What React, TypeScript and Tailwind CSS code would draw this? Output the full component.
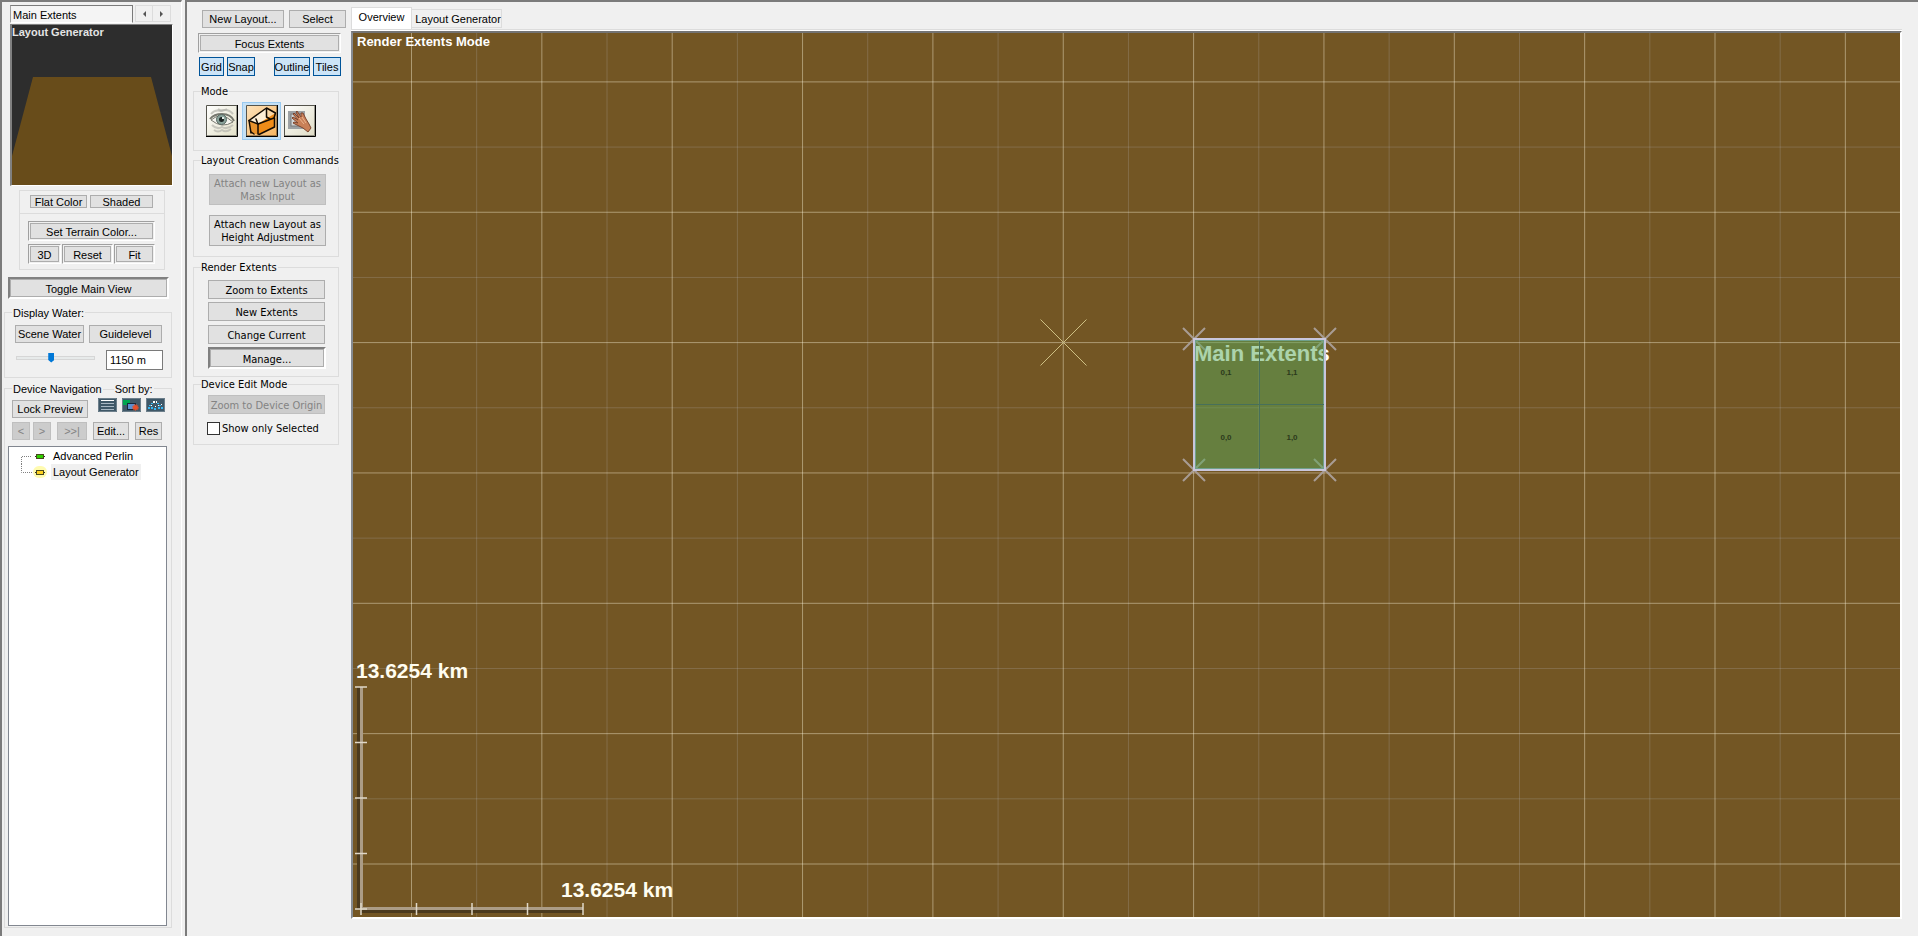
import { ReactNode } from 'react'
import clsx from 'clsx'
import { twMerge } from 'tailwind-merge'

const SANS = "font-['Liberation_Sans',Arial,sans-serif]"
const TAHOMA = "font-['DejaVu_Sans_Condensed','DejaVu_Sans',sans-serif]"

type ButtonProps = {
  children: ReactNode
  className?: string
  disabled?: boolean
  active?: boolean
}

const Button = ({ children, className, disabled, active }: ButtonProps) => (
  <button
    type="button"
    disabled={disabled}
    aria-pressed={active}
    className={twMerge(
      'flex items-center justify-center whitespace-nowrap border pt-px leading-[13px]',
      disabled && 'bg-[#cccccc] border-[#bfbfbf] text-[#838383]',
      active && 'bg-[#cce4f7] border-[#005499]',
      !disabled && !active && 'bg-[#e1e1e1] border-[#adadad]',
      className
    )}
  >
    {children}
  </button>
)

// Sunken frame around a button
const Sunken = ({
  children,
  className,
  deep,
}: {
  children: string
  className?: string
  deep?: boolean
}) => (
  <div
    className={clsx(
      'flex border-r-white border-b-white',
      deep
        ? 'border-2 border-t-[#808080] border-l-[#808080]'
        : 'border p-px border-t-[#a0a0a0] border-l-[#a0a0a0]',
      className
    )}
  >
    <Button className="flex-1 pt-[2px]">{children}</Button>
  </div>
)

const Group = ({
  title,
  children,
  className,
}: {
  title: ReactNode
  children: ReactNode
  className?: string
}) => (
  <fieldset className={clsx('min-w-0 border border-[#dcdcdc]', className)}>
    <legend className="ml-[7px] h-[14px] pr-px leading-[16px] whitespace-nowrap">
      {title}
    </legend>
    {children}
  </fieldset>
)

const ListIcon = () => (
  <svg width="19" height="14" viewBox="0 0 19 14">
    <rect width="19" height="14" fill="#3f5868" />
    <path d="M3 2.5h13" stroke="#fff" />
    <path d="M3 5.5h13M3 8.5h13M3 11.5h13" stroke="#a9b8c4" />
    <path d="M.5 .5h18v13H.5z" fill="none" stroke="#6d7f8b" />
  </svg>
)

const ShapesIcon = () => (
  <svg width="19" height="14" viewBox="0 0 19 14">
    <rect width="19" height="14" fill="#3f5868" />
    <path d="M.5 .5h18v13H.5z" fill="none" stroke="#6d7f8b" />
    <rect x="1" y="2" width="7" height="5" fill="#00a650" />
    <rect x="5.5" y="5.5" width="8" height="6" fill="#5b8fd0" stroke="#16283a" />
    <circle cx="13.5" cy="9.5" r="2.5" fill="#e8502a" />
    <circle cx="13.5" cy="9.5" r="3" fill="none" stroke="#e8502a" strokeDasharray="1 1" />
  </svg>
)

const GraphIcon = () => (
  <svg width="19" height="14" viewBox="0 0 19 14" shapeRendering="crispEdges">
    <rect width="19" height="14" fill="#3f5868" />
    <path d="M.5 .5h18v13H.5z" fill="none" stroke="#6d7f8b" />
    <path d="M2 9h2v2H2zM5 9h2v2H5zM8 10h2v2H8zM12 9h2v2h-2zM15 9h2v2h-2z" fill="#35b6f2" />
    <path d="M3 7h2v1H3zM5 5h2v1H5zM11 5h2v1h-2zM13 7h2v1h-2z" fill="#35b6f2" />
    <path d="M7 3h2v2H7zM10 3h1v2h-1zM5 7h1v1H5zM9 8h1v1H9zM12 7h1v1h-1zM15 6h1v1h-1z" fill="#fff" />
  </svg>
)

// Bevelled tile shared by the mode icons
const ModeTile = ({
  id,
  from,
  to,
  children,
}: {
  id: string
  from: string
  to: string
  children: ReactNode
}) => (
  <svg className="block" width="32" height="32" viewBox="0 0 32 32">
    <defs>
      <linearGradient id={id} x1="0" y1="0" x2="1" y2="1">
        <stop offset="0" stopColor={from} />
        <stop offset="1" stopColor={to} />
      </linearGradient>
    </defs>
    <rect width="32" height="32" fill={`url(#${id})`} />
    {children}
    <path d="M.5 32V.5H32" fill="none" stroke="#55544c" />
    <path d="M31.5 0v31.5H0" fill="none" stroke="#000" />
    <path d="M30.5 1v29.5H1" fill="none" stroke="#000" strokeOpacity="0.35" />
  </svg>
)

const EyeIcon = () => (
  <ModeTile id="tile-eye" from="#ffffff" to="#e2dfc6">
    <g fill="none" stroke="#b4b4ac" strokeWidth="2" strokeOpacity="0.7">
      <path d="M5 9q4-5 10-3q7-3 12 3" />
      <path d="M6 20q5 5 10 2q5 3 11-2M8 25q4 3 8 0q4 3 9-1" />
      <path d="M12 4q4 3 9 0" />
    </g>
    <path d="M4 14q4-5 12-5q9 0 12 7" fill="none" stroke="#77786f" strokeWidth="2" />
    <path d="M5 15q10-9 22 2q-11 7-22-2z" fill="#f4f4ee" stroke="#77786f" />
    <circle cx="15.5" cy="14.5" r="5" fill="#8aa39b" stroke="#5a6a63" />
    <circle cx="15.5" cy="14.5" r="2.5" fill="#1d2422" />
    <path d="M16 12h2v2h-2z" fill="#e4eeea" />
  </ModeTile>
)

const BoxIcon = () => (
  <ModeTile id="tile-box" from="#fde3bd" to="#f7b35c">
    <path d="M3 15.5L20.5 3L29.5 8L12 19z" fill="#fdeed6" />
    <path d="M20.5 3L29.5 8L25 15L20.5 12z" fill="#fbd9a8" />
    <path d="M3 15.5L12 19L12 29.5L5 28z" fill="#e8922c" />
    <path d="M12 19L29.5 8L28.5 22L12 29.5z" fill="#f08c18" />
    <g fill="none" stroke="#120a02" strokeWidth="1.5" strokeLinejoin="round" strokeLinecap="round">
      <path d="M3 15.5L20.5 3L29.5 8L28 13L12 19z" />
      <path d="M3 15.5L5 28M12 19V29M28.500 13L28.5 22L13 29.5" />
      <path d="M20.5 4V12L24 14M10 14l1.5 4" />
      <path d="M5 27l3 2" />
    </g>
  </ModeTile>
)

const HandIcon = () => (
  <ModeTile id="tile-hand" from="#ffffff" to="#dedbc4">
    <rect x="4" y="6" width="17" height="18" fill="#9da1a4" />
    <rect x="7" y="9" width="11" height="12" fill="#d3d5d6" stroke="#777a7c" />
    <path
      d="M12 7l1-1 4 6 0-4 2 0 3 6 3 5 2 4-3 4-5-4-4-2-6-3 1-1 4 1-6-5 1-1 5 3-5-6 1-1 5 5z"
      fill="#c98058"
      stroke="#7c4630"
      strokeLinejoin="round"
    />
    <path d="M15 13l5 6M18 12l4 6" stroke="#edb58e" />
  </ModeTile>
)

const DeviceIcon = ({ color, halo }: { color: string; halo?: boolean }) => (
  <svg width="16" height="12" viewBox="0 0 16 12">
    {halo && <rect x="1" y="0" width="14" height="12" rx="6" fill="#fffbb0" />}
    <path d="M3 6.5h10" stroke="#333" />
    <rect x="4.5" y="4.5" width="7" height="4" fill={color} stroke="#4a4a20" />
  </svg>
)

const devices = [
  { name: 'Advanced Perlin', color: '#2fd000', selected: false },
  { name: 'Layout Generator', color: '#ffd21f', selected: true },
]

const Preview = () => (
  <div className="relative ml-2 mt-px h-[162px] w-[163px] border-t border-l-2 border-r border-b border-t-[#808080] border-l-[#808080] border-r-white border-b-white bg-[#2d2d2d]">
    <svg className="block" width="160" height="160" viewBox="0 0 160 160">
      <polygon points="21,52 139,52 160,131 160,160 0,160 0,131" fill="#684c1a" />
    </svg>
    <span className="absolute left-0 top-px text-[11px] font-bold leading-[13px] text-[#e4e4e4]">
      Layout Generator
    </span>
  </div>
)

const LeftPanel = () => (
  <aside
    className={clsx(
      SANS,
      'flex w-[182px] shrink-0 flex-col border-t-2 border-l-2 border-r border-t-[#7b7b7b] border-l-[#7b7b7b] border-r-white pt-[3px] text-[11px]'
    )}
  >
    <div className="flex gap-[2px] pl-2">
      <input
        aria-label="Extents"
        defaultValue="Main Extents"
        className="h-[18px] w-[123px] border border-[#7a7a7a] border-l-[#a0a0a0] border-b-white bg-[#f4f4f4] px-[2px] pt-[2px] leading-[13px]"
      />
      <div className="flex h-[17px] border border-[#dcdcdc]">
        <button type="button" aria-label="Previous" className="flex w-[17px] items-center justify-center border-r border-[#dcdcdc]">
          <svg width="3" height="6" viewBox="0 0 3 6"><path d="M3 0v6L0 3z" fill="#555" /></svg>
        </button>
        <button type="button" aria-label="Next" className="flex w-[17px] items-center justify-center">
          <svg width="3" height="6" viewBox="0 0 3 6"><path d="M0 0v6l3-3z" fill="#555" /></svg>
        </button>
      </div>
    </div>

    <Preview />

    <div className="ml-[17px] mt-1 w-[146px] border border-[#dcdcdc]">
      <div className="flex gap-[3px] border-b border-[#dcdcdc] pl-[10px] pt-1 pb-[5px]">
        <Button className="h-[13px] w-[57px]">Flat Color</Button>
        <Button className="h-[13px] w-[63px]">Shaded</Button>
      </div>
      <div className="flex flex-col gap-[3px] pl-2 pt-[7px] pb-[5px]">
        <Sunken className="h-5 w-[127px]">Set Terrain Color...</Sunken>
        <div className="flex gap-px">
          <Sunken className="h-5 w-[33px]">3D</Sunken>
          <Sunken className="h-5 w-[51px]">Reset</Sunken>
          <Sunken className="h-5 w-[41px]">Fit</Sunken>
        </div>
      </div>
    </div>

    <Sunken deep className="ml-[6px] mt-[7px] h-[22px] w-[161px]">
      Toggle Main View
    </Sunken>

    <Group
      title={<span className="pl-px">Display Water:</span>}
      className="ml-[2px] mt-[6px] w-[168px] pb-[7px]"
    >
      <div className="flex gap-[5px] pl-[10px] pt-[6px]">
        <Button className="h-[18px] w-[69px]">Scene Water</Button>
        <Button className="h-[18px] w-[73px]">Guidelevel</Button>
      </div>
      <div className="mt-[7px] flex items-start gap-[11px] pl-[11px]">
        <input
          type="range"
          aria-label="Water level"
          min={0}
          max={100}
          defaultValue={44}
          className="mt-[2px] h-[11px] w-[79px] appearance-none bg-transparent [&::-webkit-slider-runnable-track]:h-1 [&::-webkit-slider-runnable-track]:border [&::-webkit-slider-runnable-track]:border-[#d6d6d6] [&::-webkit-slider-runnable-track]:bg-[#e7eaea] [&::-webkit-slider-thumb]:-mt-1 [&::-webkit-slider-thumb]:h-[10px] [&::-webkit-slider-thumb]:w-[6px] [&::-webkit-slider-thumb]:appearance-none [&::-webkit-slider-thumb]:bg-[#0078d7] [&::-webkit-slider-thumb]:[clip-path:polygon(0_0,100%_0,100%_75%,50%_100%,0_75%)]"
        />
        <input
          aria-label="Guidelevel height"
          defaultValue="1150 m"
          className="h-5 w-[57px] border border-[#7a7a7a] bg-white px-[3px]"
        />
      </div>
    </Group>

    <Group
      title={
        <span className="flex items-center pl-px">
          Device Navigation
          <span className="mx-px h-px w-[11px] bg-[#dcdcdc]" />
          <span>Sort by:</span>
        </span>
      }
      className="mb-2 ml-[2px] mt-[3px] flex w-[168px] flex-1 flex-col pb-px"
    >
      <div className="flex items-start gap-[5px] pl-[7px] pt-[3px]">
        <Button className="mt-[2px] mr-[5px] h-[18px] w-[76px]">Lock Preview</Button>
        <button type="button" aria-label="Sort as list"><ListIcon /></button>
        <button type="button" aria-label="Sort by type"><ShapesIcon /></button>
        <button type="button" aria-label="Sort by graph"><GraphIcon /></button>
      </div>
      <div className="mt-1 flex pl-[7px]">
        <Button disabled className="mr-[3px] h-[18px] w-[18px]">&lt;</Button>
        <Button disabled className="mr-[6px] h-[18px] w-[18px]">&gt;</Button>
        <Button disabled className="mr-[6px] h-[18px] w-[30px]">&gt;&gt;|</Button>
        <Button className="mr-[6px] h-[18px] w-[36px]">Edit...</Button>
        <Button className="h-[18px] w-[27px]">Res</Button>
      </div>
      <div className="ml-[3px] mt-[6px] w-[159px] flex-1 border border-[#828790] bg-white pt-px">
        <ul className="ml-3">
          {devices.map((device, i) => (
            <li key={device.name} className="flex h-4 items-center">
              <svg width="11" height="16" viewBox="0 0 11 16">
                <path
                  d={i === 0 ? 'M.5 16V8.5H11' : 'M.5 0V8.5H11'}
                  fill="none"
                  stroke="#808080"
                  strokeDasharray="1 1"
                />
              </svg>
              <DeviceIcon color={device.color} halo={device.selected} />
              <button
                type="button"
                className={clsx('ml-[3px] h-4 px-[2px] leading-[16px]', device.selected && 'bg-[#f0f0f0]')}
              >
                {device.name}
              </button>
            </li>
          ))}
        </ul>
      </div>
    </Group>
  </aside>
)

const ToolColumn = () => (
  <div className={clsx(SANS, 'w-[164px] shrink-0 pt-2 text-[11px]')}>
    <div className="flex gap-[5px] pl-[15px]">
      <Button className="h-[18px] w-[82px]">New Layout...</Button>
      <Button className="h-[18px] w-[57px]">Select</Button>
    </div>
    <Sunken className="ml-[11px] mt-[5px] h-5 w-[143px]">Focus Extents</Sunken>
    <div className="mt-1 flex gap-[3px] pl-3">
      <Button active className="h-[19px] w-[25px]">Grid</Button>
      <Button active className="mr-4 h-[19px] w-[28px]">Snap</Button>
      <Button active className="h-[19px] w-[36px]">Outline</Button>
      <Button active className="h-[19px] w-[28px]">Tiles</Button>
    </div>

    <div className={clsx(TAHOMA, 'ml-[6px] mt-2 w-[146px]')}>
      <Group title="Mode" className="pb-[10px]">
        <div className="flex items-center pl-3 pt-1">
          <button type="button" aria-label="View"><EyeIcon /></button>
          <button
            type="button"
            aria-label="Extents"
            aria-pressed
            className="ml-1 mr-[3px] flex h-[38px] w-[39px] items-center justify-center border border-[#99c9ef] bg-[#c4e0f5]"
          >
            <BoxIcon />
          </button>
          <button type="button" aria-label="Edit"><HandIcon /></button>
        </div>
      </Group>

      <Group title="Layout Creation Commands" className="mt-[2px] pb-[10px]">
        <div className="flex flex-col gap-[10px] pl-[15px] pt-[7px]">
          <Button disabled className="h-[31px] w-[117px] pt-0">
            Attach new Layout as<br />Mask Input
          </Button>
          <Button className="h-[31px] w-[117px] pt-0">
            Attach new Layout as<br />Height Adjustment
          </Button>
        </div>
      </Group>

      <Group title="Render Extents" className="mt-[3px] pb-[7px]">
        <div className="flex flex-col gap-[3px] pl-[14px] pt-[6px]">
          <Button className="h-[19px] w-[117px]">Zoom to Extents</Button>
          <Button className="h-[19px] w-[117px]">New Extents</Button>
          <Button className="mt-px h-[19px] w-[117px]">Change Current</Button>
          <Sunken deep className="h-[22px] w-[118px]">Manage...</Sunken>
        </div>
      </Group>

      <Group title="Device Edit Mode" className="pb-[9px]">
        <div className="pl-[14px] pt-1">
          <Button disabled className="h-[19px] w-[117px]">Zoom to Device Origin</Button>
        </div>
        <label className="mt-2 flex h-[13px] items-center gap-[2px] pl-[13px] leading-[13px] whitespace-nowrap">
          <input
            type="checkbox"
            className="h-[13px] w-[13px] appearance-none border border-[#333] bg-white"
          />
          Show only Selected
        </label>
      </Group>
    </div>
  </div>
)

// Terrain grid: one major line every CELL pixels, a faint one halfway
const CELL = 130.35
const GRID_X = 58.5
const GRID_Y = 48.9
const lines = Array.from({ length: 40 }, (_, i) => i)

const CORNERS = [
  [841, 306],
  [972, 306],
  [841, 437],
  [972, 437],
]

const TILES = [
  { label: '0,1', x: 873, y: 342 },
  { label: '1,1', x: 939, y: 342 },
  { label: '0,0', x: 873, y: 407 },
  { label: '1,0', x: 939, y: 407 },
]

const Terrain = () => (
  <svg className="absolute inset-0 h-full w-full">
    {lines.map((i) => {
      const x = GRID_X + (i * CELL) / 2
      const y = GRID_Y + (i * CELL) / 2
      return (
        <g key={i} strokeOpacity={i % 2 === 0 ? 0.42 : 0.17}>
          <line x1={x} x2={x} y1="0" y2="100%" stroke={i % 2 ? '#d8e4ff' : '#fff8e0'} />
          <line x1="0" x2="100%" y1={y} y2={y} stroke={i % 2 ? '#d8e4ff' : '#fff8e0'} />
        </g>
      )
    })}
    <path d="M687.5 286.5l46 46M733.5 286.5l-46 46" stroke="#cdbf83" />
    <g stroke="#a89c94" strokeWidth="2">
      {CORNERS.map(([x, y]) => (
        <path key={`${x}-${y}`} d={`M${x - 11} ${y - 11}l22 22M${x + 11} ${y - 11}l-22 22`} />
      ))}
    </g>
    <text x="841" y="328" fontSize="22" fontWeight="bold" fill="#fff">
      Main Extents
    </text>
    <rect x="841" y="306" width="131" height="131" fill="#5aa85a" fillOpacity="0.5" />
    <rect x="841" y="306" width="131" height="131" fill="none" stroke="#c9c6dc" strokeWidth="2" />
    <rect x="842.5" y="307.5" width="128" height="128" fill="none" stroke="#6fa08a" />
    <path d="M906.5 308v128M843 371.5h128" stroke="#47705a" />
    {TILES.map((tile) => (
      <text
        key={tile.label}
        x={tile.x}
        y={tile.y}
        fontSize="8"
        fontWeight="bold"
        textAnchor="middle"
        fill="#2c3a1c"
      >
        {tile.label}
      </text>
    ))}
  </svg>
)

const ScaleBar = () => (
  <>
    <svg className="absolute bottom-0 left-0" width="240" height="240" viewBox="0 0 240 240">
      <path d="M5.5 10v222M8 234.5h222" stroke="#4b3a1e" strokeWidth="3" />
      <path d="M8.5 10v222M8 231.5h222" stroke="#ab9c86" strokeWidth="3" />
      {[0, 1, 2, 3, 4].map((i) => (
        <path
          key={i}
          d={`M2 ${10 + i * 55.5}h12M${8 + i * 55.5} 226v12`}
          stroke="#e0d8c8"
          strokeWidth="1.5"
        />
      ))}
    </svg>
    <span className="absolute bottom-[234px] left-[3px] text-[21px] font-bold leading-6 text-[#fffdf0]">
      13.6254 km
    </span>
    <span className="absolute bottom-[15px] left-[208px] text-[21px] font-bold leading-6 text-[#fffdf0]">
      13.6254 km
    </span>
  </>
)

const Viewport = () => (
  <main className={clsx(SANS, 'mr-4 mb-[17px] flex min-w-0 flex-1 flex-col pt-[5px] text-[11px]')}>
    <div role="tablist" className="flex h-[22px] items-end">
      <button
        type="button"
        role="tab"
        aria-selected
        className="h-[22px] w-[61px] border border-b-0 border-[#dcdcdc] bg-white pb-1 leading-[14px]"
      >
        Overview
      </button>
      <button
        type="button"
        role="tab"
        aria-selected={false}
        className="mb-px h-[19px] w-[90px] border border-l-0 border-[#dcdcdc] pl-[3px] leading-[18px] whitespace-nowrap"
      >
        Layout Generator
      </button>
    </div>
    <div className="h-[2px] border-t border-[#dcdcdc] bg-white" />
    <div className="relative flex-1 overflow-hidden border-2 border-t-[#747474] border-l-[#858a90] border-r-white border-b-white bg-[#735624]">
      <Terrain />
      <ScaleBar />
      <span className="absolute left-1 top-px text-[13px] font-bold leading-4 text-white">
        Render Extents Mode
      </span>
    </div>
  </main>
)

export default function App() {
  return (
    <div className="flex min-h-screen bg-white pr-[2px] pb-px text-black">
      <div className="flex min-w-0 flex-1 bg-[#f0f0f0]">
        <LeftPanel />
        <section className="ml-[3px] flex min-w-0 flex-1 border-t-2 border-l-2 border-t-[#7b7b7b] border-l-[#7b7b7b]">
          <ToolColumn />
          <Viewport />
        </section>
      </div>
    </div>
  )
}
